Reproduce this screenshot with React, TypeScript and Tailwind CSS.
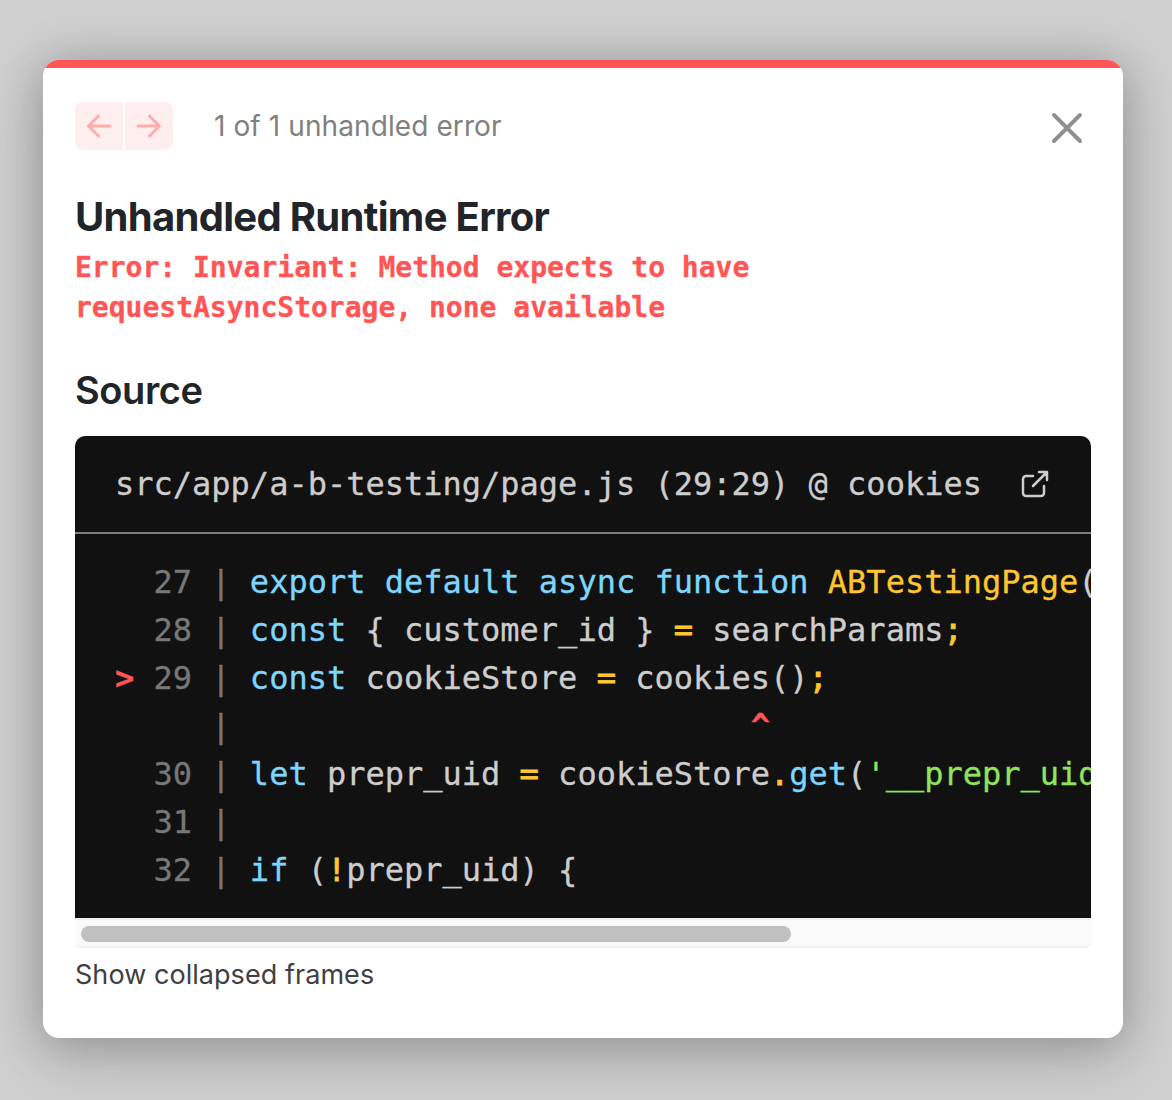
const mono = "font-['DejaVu_Sans_Mono',monospace]";

const C = ({ children }: { children: React.ReactNode }) => <span className="text-[#7dd6fd]">{children}</span>;
const Y = ({ children }: { children: React.ReactNode }) => <span className="text-[#ffc72e]">{children}</span>;
const O = ({ children }: { children: React.ReactNode }) => <span className="text-[#ffc72e] [-webkit-text-stroke:0.8px]">{children}</span>;
const G = ({ children }: { children: React.ReactNode }) => <span className="text-[#90e45c]">{children}</span>;
const N = ({ children }: { children: React.ReactNode }) => <span className="text-[#777777]">{children}</span>;

function Arrow({ flip }: { flip?: boolean }) {
  return (
    <svg width="26" height="26" viewBox="0 0 26 26" fill="none" stroke="#ffabab" strokeWidth="3" strokeLinecap="round" strokeLinejoin="round" className={flip ? "rotate-180" : ""}>
      <path d="M24 13H2.5M12.500 3 2.500 13l10 10" />
    </svg>
  );
}

export default function App() {
  return (
    <div className="h-[1100px] w-[1172px] overflow-hidden bg-[#cfcfcf] px-[43px] pt-[60px] font-['Inter',sans-serif]">
      <div className="h-[978px] w-[1080px] overflow-hidden rounded-2xl bg-white shadow-[0_4px_48px_rgba(0,0,0,0.26),0_24px_64px_rgba(0,0,0,0.1)]">
        <div className="h-2 bg-[#ff5555]" />
        <div className="flex items-center px-8 pt-[34px]">
          <div className="flex h-12 w-[98px] gap-0.5">
            <div className="flex w-12 items-center justify-center rounded-l-lg bg-[#ffeeee]"><Arrow /></div>
            <div className="flex w-12 items-center justify-center rounded-r-lg bg-[#ffeeee]"><Arrow flip /></div>
          </div>
          <div className="ml-[41px] -mt-px text-[28px] leading-12 tracking-[0.1px] text-[#808080]">1 of 1 unhandled error</div>
          <svg width="32" height="32" viewBox="0 0 32 32" fill="none" stroke="#909090" strokeWidth="4" strokeLinecap="round" className="ml-auto mt-1 mr-2">
            <path d="M3 3 29 29M29 3 3 29" />
          </svg>
        </div>
        <h1 className="mt-[42px] px-8 text-[40px] leading-[50px] font-bold tracking-[-0.7px] text-[#212529]">Unhandled Runtime Error</h1>
        <p className={`mt-[6px] px-8 text-[28px] leading-10 font-bold whitespace-pre text-[#ff5555] [-webkit-text-stroke:0.3px_#ff5555] ${mono}`}>{"Error: Invariant: Method expects to have\nrequestAsyncStorage, none available"}</p>
        <h2 className="mt-[37px] px-8 text-[38px] leading-[50px] font-semibold tracking-[-0.4px] text-[#212529]">Source</h2>
        <div className={`mx-8 mt-[21px] overflow-hidden rounded-t-[10px] bg-[#111111] text-[32px] leading-12 whitespace-pre text-[#cdcdcd] [-webkit-text-stroke:0.3px] ${mono}`}>
          <div className="flex h-[98px] items-center border-b-2 border-[#7d7d7d] pl-10">
            <span>src/app/a-b-testing/page.js (29:29) @ cookies</span>
            <svg width="32" height="32" viewBox="0 0 32 32" fill="none" stroke="#cdcdcd" strokeWidth="2.5" strokeLinecap="round" strokeLinejoin="round" className="ml-[37px]">
              <path d="M14 8H7a3 3 0 0 0-3 3v14a3 3 0 0 0 3 3h15a3 3 0 0 0 3-3v-7M28 4 14 18M20 4h8v8" />
            </svg>
          </div>
          <div className="h-[384px] overflow-hidden pt-6 pl-10">
            <div>{"  "}<N>{"27 | "}</N><C>export default async function</C> <Y>ABTestingPage</Y>{"({ searchParams }) {"}</div>
            <div>{"  "}<N>{"28 | "}</N><C>const</C>{" { customer_id } "}<O>=</O>{" searchParams"}<O>;</O></div>
            <div><span className="font-bold text-[#ff5555]">{">"}</span>{" "}<N>{"29 | "}</N><C>const</C>{" cookieStore "}<O>=</O>{" cookies()"}<O>;</O></div>
            <div>{"     "}<N>|</N>{"                           "}<span className="font-bold text-[#ff5555]">^</span></div>
            <div>{"  "}<N>{"30 | "}</N><C>let</C>{" prepr_uid "}<O>=</O>{" cookieStore"}<O>.</O><C>get</C>{"("}<G>{"'__prepr_uid'"}</G>{");"}</div>
            <div>{"  "}<N>{"31 |"}</N></div>
            <div>{"  "}<N>{"32 | "}</N><C>if</C>{" ("}<O>!</O>{"prepr_uid) {"}</div>
          </div>
        </div>
        <div className="mx-8 h-[30px] rounded-b-md border-y-2 border-[#efefef] bg-[#fafafa] px-1.5 pt-1.5">
          <div className="h-4 w-[710px] rounded-full bg-[#c0c0c0]" />
        </div>
        <div className="mt-[9px] px-8 text-[27px] leading-9 tracking-[0.05px] text-[#404040]">Show collapsed frames</div>
      </div>
    </div>
  );
}
